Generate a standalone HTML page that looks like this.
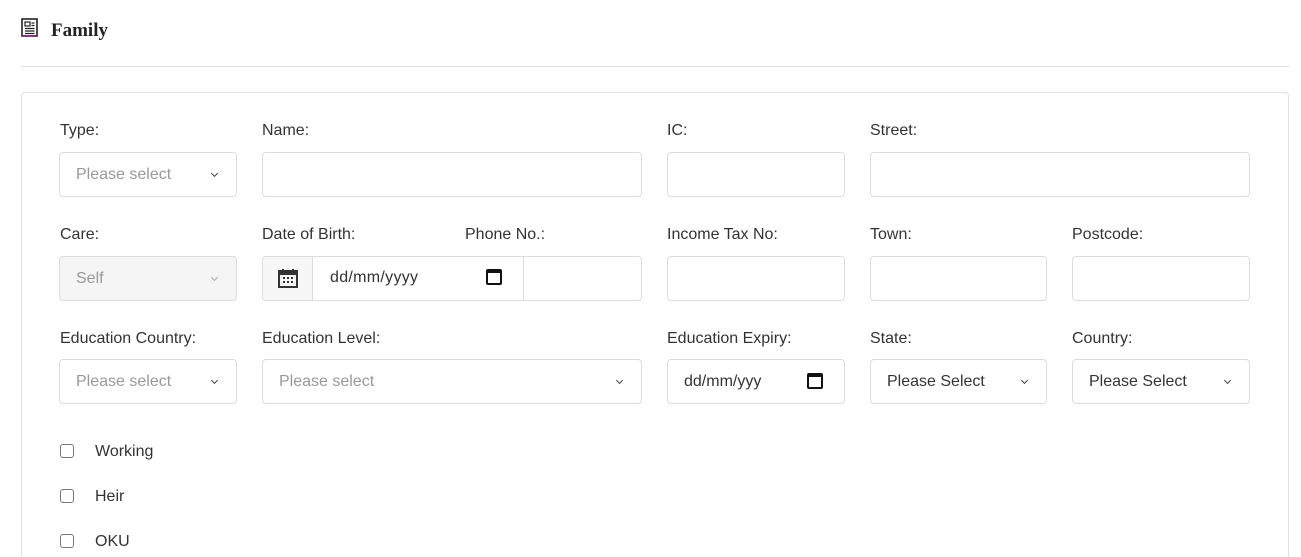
<!DOCTYPE html>
<html style="overflow:hidden;height:557px"><head><meta charset="utf-8"><style>
*{box-sizing:border-box;margin:0;padding:0}
body{width:1301px;height:557px;background:#fff;position:relative;overflow:hidden;font-family:"Liberation Sans",Arial,sans-serif;font-size:16px;color:#333}
.a{position:absolute}
.l{position:absolute;font-size:16px;color:#333;line-height:18px}
.i{position:absolute;height:45px;border:1px solid #dcdcdc;border-radius:4px;background:#fff;line-height:43px;padding-left:16px;font-size:16px}
.ph{color:#999}
.dis{background:#f5f5f5}
.chev{position:absolute;right:19px;top:18px;width:5px;height:5px;border-right:1.8px solid #444;border-bottom:1.8px solid #444;transform:rotate(45deg)}
.cb{position:absolute;left:60px;width:14px;height:14px;border:1.5px solid #777;border-radius:3px}
.cal{position:absolute;width:16px;height:16px;border:2px solid #111;border-top-width:4px;border-radius:2px}
</style></head><body>
<svg class="a" style="left:21px;top:18px" width="18" height="20" viewBox="0 0 18 20"><rect x="1" y="1" width="15" height="17" fill="#fff" stroke="#222" stroke-width="1.6"/><rect x="4" y="4" width="5" height="4" fill="none" stroke="#222" stroke-width="1.2"/><path d="M10.5 5h3M10.5 7.5h3M4 10.5h9.5M4 13h9.5M4 15.5h9.5" stroke="#222" stroke-width="1.2"/><path d="M1 18h16" stroke="#7a2a7a" stroke-width="1.5"/></svg>
<div class="a" style="left:51px;top:20px;font-family:'Liberation Serif',serif;font-weight:bold;font-size:19px;color:#222">Family</div>
<div class="a" style="left:21px;top:66px;width:1268px;height:1px;background:#dedede"></div>
<div class="a" style="left:21px;top:92px;width:1268px;height:465px;border:1px solid #e2e2e2;border-bottom:none;border-radius:4px 4px 0 0"></div>

<div class="l" style="left:60px;top:122px">Type:</div>
<div class="l" style="left:262px;top:122px">Name:</div>
<div class="l" style="left:667px;top:122px">IC:</div>
<div class="l" style="left:870px;top:122px">Street:</div>
<div class="i ph" style="left:59px;top:152px;width:178px">Please select<span class="chev"></span></div>
<div class="i" style="left:262px;top:152px;width:380px"></div>
<div class="i" style="left:667px;top:152px;width:178px"></div>
<div class="i" style="left:870px;top:152px;width:380px"></div>

<div class="l" style="left:60px;top:226px">Care:</div>
<div class="l" style="left:262px;top:226px">Date of Birth:</div>
<div class="l" style="left:465px;top:226px">Phone No.:</div>
<div class="l" style="left:667px;top:226px">Income Tax No:</div>
<div class="l" style="left:870px;top:226px">Town:</div>
<div class="l" style="left:1072px;top:226px">Postcode:</div>
<div class="i ph dis" style="left:59px;top:256px;width:178px">Self<span class="chev" style="border-color:#aaa"></span></div>
<div class="i" style="left:262px;top:256px;width:380px;padding:0"></div>
<div class="a" style="left:263px;top:257px;width:50px;height:43px;background:#f7f7f7;border-right:1px solid #dcdcdc;border-radius:4px 0 0 4px"></div>
<svg class="a" style="left:278px;top:268px" width="20" height="20" viewBox="0 0 20 20"><rect x="1" y="3" width="18" height="16" fill="none" stroke="#333" stroke-width="2"/><rect x="1" y="3" width="18" height="4" fill="#333"/><path d="M5 1v4M15 1v4" stroke="#333" stroke-width="2"/><g fill="#333"><rect x="5" y="9" width="2" height="2"/><rect x="9" y="9" width="2" height="2"/><rect x="13" y="9" width="2" height="2"/><rect x="5" y="13" width="2" height="2"/><rect x="9" y="13" width="2" height="2"/><rect x="13" y="13" width="2" height="2"/></g></svg>
<div class="a" style="left:330px;top:269px;font-size:16px;letter-spacing:.3px">dd/mm/yyyy</div>
<div class="cal" style="left:486px;top:269px"></div>
<div class="a" style="left:523px;top:257px;width:1px;height:43px;background:#dcdcdc"></div>
<div class="i" style="left:667px;top:256px;width:178px"></div>
<div class="i" style="left:870px;top:256px;width:177px"></div>
<div class="i" style="left:1072px;top:256px;width:178px"></div>

<div class="l" style="left:60px;top:330px">Education Country:</div>
<div class="l" style="left:262px;top:330px">Education Level:</div>
<div class="l" style="left:667px;top:330px">Education Expiry:</div>
<div class="l" style="left:870px;top:330px">State:</div>
<div class="l" style="left:1072px;top:330px">Country:</div>
<div class="i ph" style="left:59px;top:359px;width:178px">Please select<span class="chev"></span></div>
<div class="i ph" style="left:262px;top:359px;width:380px">Please select<span class="chev"></span></div>
<div class="i" style="left:667px;top:359px;width:178px">dd/mm/yyy</div>
<div class="cal" style="left:807px;top:373px"></div>
<div class="i" style="left:870px;top:359px;width:177px">Please Select<span class="chev"></span></div>
<div class="i" style="left:1072px;top:359px;width:178px">Please Select<span class="chev"></span></div>

<div class="cb" style="top:444px"></div><div class="l" style="left:95px;top:443px">Working</div>
<div class="cb" style="top:489px"></div><div class="l" style="left:95px;top:488px">Heir</div>
<div class="cb" style="top:534px"></div><div class="l" style="left:95px;top:533px">OKU</div>
</body></html>
